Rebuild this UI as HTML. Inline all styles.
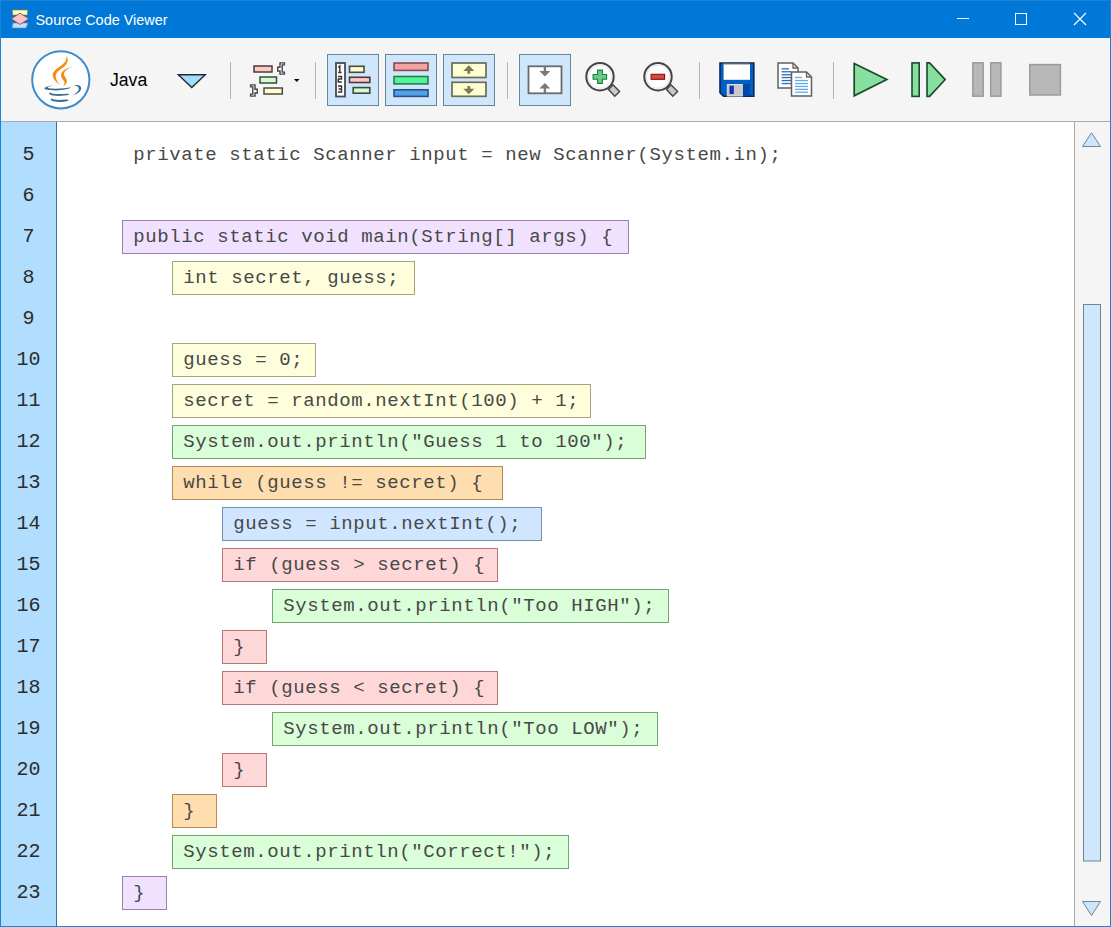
<!DOCTYPE html>
<html><head><meta charset="utf-8">
<style>
html,body{margin:0;padding:0;width:1111px;height:927px;overflow:hidden;background:#f5f5f5;}
*{box-sizing:border-box;}
#gutter{position:absolute;left:1px;top:122px;width:56px;height:804px;background:#b1defe;border-right:1px solid #3f6f98;}
#code{position:absolute;left:57px;top:122px;width:1017px;height:804px;background:#fff;}
#sbar{position:absolute;left:1074px;top:122px;width:36px;height:804px;background:#f5f5f5;border-left:1px solid #a8a8a8;}
.ln{position:absolute;left:1px;width:55px;text-align:center;font:20px "Liberation Mono",monospace;color:#2c2c2c;line-height:24px;}
.cl{position:absolute;font:19px "Liberation Mono",monospace;letter-spacing:0.6px;color:#484848;line-height:24px;white-space:pre;}
.bx{position:absolute;height:34px;border:1px solid;}
.pu{background:#f0e2fe;border-color:#9c7eb0;}
.ye{background:#fefedc;border-color:#a4a47e;}
.gr{background:#dafed8;border-color:#74a474;}
.or{background:#fedeae;border-color:#b48a58;}
.bl{background:#d0e6fe;border-color:#6e92b4;}
.rd{background:#fed8d8;border-color:#b47878;}
svg{position:absolute;left:0;top:0;}
</style></head><body>
<div id="gutter"></div>
<div id="code"></div>
<div id="sbar"></div>
<div class="ln" style="top:143px">5</div>
<div class="cl" style="left:133.3px;top:143px">private static Scanner input = new Scanner(System.in);</div>
<div class="ln" style="top:184px">6</div>
<div class="ln" style="top:225px">7</div>
<div class="bx pu" style="left:122px;top:220px;width:507px"></div>
<div class="cl" style="left:133.3px;top:225px">public static void main(String[] args) {</div>
<div class="ln" style="top:266px">8</div>
<div class="bx ye" style="left:172px;top:261px;width:243px"></div>
<div class="cl" style="left:183.3px;top:266px">int secret, guess;</div>
<div class="ln" style="top:307px">9</div>
<div class="ln" style="top:348px">10</div>
<div class="bx ye" style="left:172px;top:343px;width:144px"></div>
<div class="cl" style="left:183.3px;top:348px">guess = 0;</div>
<div class="ln" style="top:389px">11</div>
<div class="bx ye" style="left:172px;top:384px;width:419px"></div>
<div class="cl" style="left:183.3px;top:389px">secret = random.nextInt(100) + 1;</div>
<div class="ln" style="top:430px">12</div>
<div class="bx gr" style="left:172px;top:425px;width:474px"></div>
<div class="cl" style="left:183.3px;top:430px">System.out.println(&quot;Guess 1 to 100&quot;);</div>
<div class="ln" style="top:471px">13</div>
<div class="bx or" style="left:172px;top:466px;width:331px"></div>
<div class="cl" style="left:183.3px;top:471px">while (guess != secret) {</div>
<div class="ln" style="top:512px">14</div>
<div class="bx bl" style="left:222px;top:507px;width:320px"></div>
<div class="cl" style="left:233.3px;top:512px">guess = input.nextInt();</div>
<div class="ln" style="top:553px">15</div>
<div class="bx rd" style="left:222px;top:548px;width:276px"></div>
<div class="cl" style="left:233.3px;top:553px">if (guess &gt; secret) {</div>
<div class="ln" style="top:594px">16</div>
<div class="bx gr" style="left:272px;top:589px;width:397px"></div>
<div class="cl" style="left:283.3px;top:594px">System.out.println(&quot;Too HIGH&quot;);</div>
<div class="ln" style="top:635px">17</div>
<div class="bx rd" style="left:222px;top:630px;width:45px"></div>
<div class="cl" style="left:233.3px;top:635px">}</div>
<div class="ln" style="top:676px">18</div>
<div class="bx rd" style="left:222px;top:671px;width:276px"></div>
<div class="cl" style="left:233.3px;top:676px">if (guess &lt; secret) {</div>
<div class="ln" style="top:717px">19</div>
<div class="bx gr" style="left:272px;top:712px;width:386px"></div>
<div class="cl" style="left:283.3px;top:717px">System.out.println(&quot;Too LOW&quot;);</div>
<div class="ln" style="top:758px">20</div>
<div class="bx rd" style="left:222px;top:753px;width:45px"></div>
<div class="cl" style="left:233.3px;top:758px">}</div>
<div class="ln" style="top:799px">21</div>
<div class="bx or" style="left:172px;top:794px;width:45px"></div>
<div class="cl" style="left:183.3px;top:799px">}</div>
<div class="ln" style="top:840px">22</div>
<div class="bx gr" style="left:172px;top:835px;width:397px"></div>
<div class="cl" style="left:183.3px;top:840px">System.out.println(&quot;Correct!&quot;);</div>
<div class="ln" style="top:881px">23</div>
<div class="bx pu" style="left:122px;top:876px;width:45px"></div>
<div class="cl" style="left:133.3px;top:881px">}</div>
<svg width="1111" height="927" viewBox="0 0 1111 927">
<rect x="0" y="0" width="1111" height="38" fill="#0078d7"/>
<rect x="0.5" y="0.5" width="1110" height="926" fill="none" stroke="#1a84d8" stroke-width="1"/>
<rect x="1" y="121" width="1109" height="1" fill="#ababab"/>
<rect x="12.5" y="10" width="15" height="5" fill="#fefebc" stroke="#7a7a5a" stroke-width="0.6"/>
<polygon points="13,23 28,23 26,28 12,28" fill="#c4def8" stroke="#6a88a8" stroke-width="0.6"/>
<polygon points="11.3,18.8 20,13.2 28.8,18.8 20,24.4" fill="#ffc2c6" stroke="#7a5050" stroke-width="0.8"/>
<text x="35.5" y="24.5" font-family="Liberation Sans" font-size="15" fill="#fff" textLength="132" lengthAdjust="spacingAndGlyphs">Source Code Viewer</text>
<rect x="957" y="18" width="12" height="1" fill="#fff"/>
<rect x="1015.5" y="13.5" width="11" height="11" fill="none" stroke="#fff" stroke-width="1"/>
<path d="M1074 13 L1086 25 M1086 13 L1074 25" stroke="#fff" stroke-width="1.1" fill="none"/>
<circle cx="60.8" cy="79.8" r="28.6" fill="#fff" stroke="#3d8ccc" stroke-width="2"/>
<path d="M66.3 56 C68.6 59 68.2 63 64.2 66.5 C60.2 69.8 55.9 72 55.7 76 C55.6 79 57.5 82 59.8 85 C56.5 82.5 52.9 79 52.7 75.5 C52.5 71.5 57 68.5 61.5 65.3 C65 62.8 67 60 66.3 56 Z" fill="#f38b14"/>
<path d="M72.5 66.7 C68 67.5 62.5 70 61.2 73.8 C60.3 77 63 79.5 64.2 81.5 C65 83.3 64.2 85 63 86.4 C66.5 84.5 67.6 81.5 66.3 79 C65.3 77 63.6 75.5 64.1 73 C64.9 70.5 68.5 68.3 72.5 66.7 Z" fill="#f38b14"/>
<path d="M53.4 85.3 C49 86 44.5 87.2 44.3 88.3 C44.5 89.9 50 90.6 57 90.4 C63 90.2 69 89 71.6 87.3 C66 88.3 58 88.8 52 88.6 C47.5 88.4 47 87.5 48.5 86.8 C50 86.2 52 85.7 53.4 85.3 Z" fill="#3d6e9a"/>
<path d="M74 85.3 C78.5 84.5 81.6 86 81.1 89 C80.6 92 76.5 94.5 72.4 95.6 C75.5 93.6 78.5 91.5 78.8 89.2 C79 87 77 85.8 74 85.3 Z" fill="#3d6e9a"/>
<path d="M50.5 92 C48.5 93 49 95 53 95.6 C58 96.3 65 96 69.6 94.5 C69 93.8 68 93.5 66.5 93.7 C62 94.2 57 94.2 53.5 93.8 C51.5 93.6 50.8 93 50.5 92 Z" fill="#3d6e9a"/>
<path d="M51.5 98.3 C50 99.3 50.8 101 54.5 101.6 C59 102.2 64.5 101.9 68.8 100.4 C68.2 99.6 67 99.4 65.5 99.6 C61.5 100 57.5 100 54.5 99.6 C52.8 99.4 51.8 98.9 51.5 98.3 Z" fill="#3d6e9a"/>
<text x="110" y="86.2" font-family="Liberation Sans" font-size="18" fill="#000" textLength="37.2" lengthAdjust="spacingAndGlyphs">Java</text>
<polygon points="178.3,74.7 205.3,74.7 191.8,87.6" fill="#a6dcf8" stroke="#1c2c38" stroke-width="1.4" stroke-linejoin="miter"/>
<rect x="230" y="62" width="1" height="37" fill="#b4b4b4"/>
<rect x="315" y="62" width="1" height="37" fill="#b4b4b4"/>
<rect x="507" y="62" width="1" height="37" fill="#b4b4b4"/>
<rect x="699" y="62" width="1" height="37" fill="#b4b4b4"/>
<rect x="833" y="62" width="1" height="37" fill="#b4b4b4"/>
<rect x="254" y="66" width="18" height="6" fill="#ffc8c8" stroke="#4a3a3a" stroke-width="1.5"/>
<rect x="260" y="77" width="16.5" height="6" fill="#d0fcd0" stroke="#3a4a3a" stroke-width="1.5"/>
<rect x="264" y="88" width="18.3" height="6" fill="#fefed0" stroke="#4a4a3a" stroke-width="1.5"/>
<polygon points="280,62.9 284.4,62.9 284.4,64.9 282.2,64.9 282.2,72.1 284.4,72.1 284.4,74.1 280,74.1 280,71 277.7,71 277.7,67.3 280,67.3" fill="#fff" stroke="#454545" stroke-width="1.4" stroke-linejoin="miter"/>
<polygon points="255.0,84.9 250.6,84.9 250.6,86.9 252.8,86.9 252.8,94.1 250.6,94.1 250.6,96.1 255.0,96.1 255.0,93 257.3,93 257.3,89.3 255.0,89.3" fill="#fff" stroke="#454545" stroke-width="1.4" stroke-linejoin="miter"/>
<polygon points="294,79 299.5,79 296.75,82" fill="#000"/>
<rect x="327.5" y="54.5" width="51" height="51" fill="#d0e6fc" stroke="#668896" stroke-width="1"/>
<rect x="385.5" y="54.5" width="51" height="51" fill="#d0e6fc" stroke="#668896" stroke-width="1"/>
<rect x="443.5" y="54.5" width="51" height="51" fill="#d0e6fc" stroke="#668896" stroke-width="1"/>
<rect x="519.5" y="54.5" width="51" height="51" fill="#d0e6fc" stroke="#668896" stroke-width="1"/>
<rect x="336" y="63" width="9" height="33.5" fill="#fff" stroke="#4a4a4a" stroke-width="1.8"/>
<path d="M338.3 67.5 L339.8 66 V72.5 M338.2 72.5 H341.6" stroke="#333" stroke-width="1.4" fill="none"/>
<path d="M338 76.5 H341.5 V79 H338.3 V82 H341.8" stroke="#333" stroke-width="1.4" fill="none"/>
<path d="M338 86 H341.5 V92 H338 M338.5 89 H341.5" stroke="#333" stroke-width="1.4" fill="none"/>
<rect x="349.5" y="66.3" width="14.5" height="6" fill="#fefed0" stroke="#4a4a3a" stroke-width="1.6"/>
<rect x="349.5" y="77.3" width="20.3" height="5.2" fill="#ffc8c8" stroke="#4a3a3a" stroke-width="1.6"/>
<rect x="353.2" y="87.6" width="16.6" height="5.6" fill="#d0fcd0" stroke="#3a4a3a" stroke-width="1.6"/>
<rect x="394" y="63" width="34" height="7.4" fill="#f4a2a2" stroke="#805050" stroke-width="1.6"/>
<rect x="394" y="76.5" width="34" height="7.4" fill="#52f49e" stroke="#2a7a48" stroke-width="1.6"/>
<rect x="394" y="89.8" width="34" height="6.6" fill="#50a0ec" stroke="#2a5080" stroke-width="1.6"/>
<rect x="452" y="63" width="34" height="14.5" fill="#fefed2" stroke="#6c6c5a" stroke-width="1.7"/>
<rect x="452" y="82.3" width="34" height="14" fill="#fefed2" stroke="#6c6c5a" stroke-width="1.7"/>
<path d="M463.3 71 L468.8 65.3 L474.3 71 H470.2 V73.8 H467.4 V71 Z" fill="#7a7a58"/>
<path d="M463.3 88.8 L468.8 94.3 L474.3 88.8 H470.2 V85.9 H467.4 V88.8 Z" fill="#7a7a58"/>
<rect x="528.5" y="66.3" width="33" height="27" fill="#fff" stroke="#6a6a6a" stroke-width="1.8"/>
<path d="M539.4 71 L544.9 76.4 L550.3 71 H546.1 V66 H543.7 V71 Z" fill="#7a7a7a"/>
<path d="M539.4 88.5 L544.9 83.1 L550.3 88.5 H546.1 V93 H543.7 V88.5 Z" fill="#7a7a7a"/>
<polygon points="608.5,89.5 613,84.8 619.6,91.6 614.8,96.3" fill="#c8c8c8" stroke="#444" stroke-width="1.4" stroke-linejoin="miter"/>
<circle cx="600" cy="76.7" r="13.7" fill="#fff" stroke="#444" stroke-width="2"/>
<circle cx="600" cy="76.7" r="11.5" fill="none" stroke="#e8e8e8" stroke-width="1.2"/>
<path d="M597.6 70.1 H602.4 V74.5 H606.6 V79.3 H602.4 V83.4 H597.6 V79.3 H593.1 V74.5 H597.6 Z" fill="#6cc98c" stroke="#17863a" stroke-width="1.1"/>
<polygon points="666.5,89.5 671,84.8 677.6,91.6 672.8,96.3" fill="#c8c8c8" stroke="#444" stroke-width="1.4" stroke-linejoin="miter"/>
<circle cx="658" cy="76.7" r="13.7" fill="#fff" stroke="#444" stroke-width="2"/>
<circle cx="658" cy="76.7" r="11.5" fill="none" stroke="#e8e8e8" stroke-width="1.2"/>
<rect x="651.1" y="74.3" width="13.5" height="5" fill="#d24a4a" stroke="#8a0c0c" stroke-width="1.1"/>
<path d="M720 63 H753.8 V96.3 H723.6 L720 92.7 Z" fill="#0060c8" stroke="#0a2850" stroke-width="1.6"/>
<rect x="723.6" y="63.4" width="26.4" height="16.4" fill="#fff"/>
<rect x="723.6" y="62.8" width="26.4" height="1.6" fill="#606060"/>
<rect x="742.7" y="84" width="7.3" height="12" fill="#0048a8"/>
<rect x="727.3" y="84.5" width="15" height="11.5" fill="#c8c8c8" stroke="#e4dccc" stroke-width="1"/>
<rect x="729.5" y="85.7" width="4.3" height="8.4" fill="#0a34b4"/>
<path d="M778 63 H793 L798 68 V88 H778 Z" fill="#fff" stroke="#606060" stroke-width="1.5" stroke-linejoin="miter"/>
<path d="M793 63 V68 H798" fill="none" stroke="#606060" stroke-width="1.3"/>
<rect x="781.6" y="68.2" width="7.399999999999977" height="1.3" fill="#2a6fbd"/>
<rect x="781.6" y="71.10000000000001" width="9.399999999999977" height="1.3" fill="#2a6fbd"/>
<rect x="781.6" y="74.10000000000001" width="9.399999999999977" height="1.3" fill="#2a6fbd"/>
<rect x="781.6" y="76.9" width="9.399999999999977" height="1.3" fill="#2a6fbd"/>
<rect x="781.6" y="79.9" width="9.399999999999977" height="1.3" fill="#2a6fbd"/>
<rect x="781.6" y="82.9" width="9.399999999999977" height="1.3" fill="#2a6fbd"/>
<path d="M791.5 72 H806.5 L811.5 77 V96 H791.5 Z" fill="#fff" stroke="#606060" stroke-width="1.5" stroke-linejoin="miter"/>
<path d="M806.5 72 V77 H811.5" fill="none" stroke="#606060" stroke-width="1.3"/>
<rect x="795" y="76.80000000000001" width="7" height="1.3" fill="#64acf2"/>
<rect x="795" y="79.9" width="13" height="1.3" fill="#64acf2"/>
<rect x="795" y="82.9" width="13" height="1.3" fill="#64acf2"/>
<rect x="795" y="85.80000000000001" width="13" height="1.3" fill="#64acf2"/>
<rect x="795" y="88.7" width="13" height="1.3" fill="#64acf2"/>
<rect x="795" y="91.60000000000001" width="13" height="1.3" fill="#64acf2"/>
<polygon points="854.2,63.5 886.8,79.6 854.2,95.8" fill="#88e0a0" stroke="#1a4a2a" stroke-width="1.7" stroke-linejoin="miter"/>
<rect x="912" y="62.9" width="7.2" height="33.5" fill="#88e0a0" stroke="#1a4a2a" stroke-width="1.6"/>
<polygon points="927,62.9 929.6,62.9 945.2,79.6 929.6,96.4 927,96.4" fill="#88e0a0" stroke="#1a4a2a" stroke-width="1.6" stroke-linejoin="miter"/>
<rect x="972.8" y="62.8" width="10.4" height="33.4" fill="#b8b8b8" stroke="#9c9c9c" stroke-width="1.5"/>
<rect x="990.7" y="62.8" width="10.2" height="33.4" fill="#b8b8b8" stroke="#9c9c9c" stroke-width="1.5"/>
<rect x="1029.8" y="64.6" width="30.6" height="30.4" fill="#b8b8b8" stroke="#9c9c9c" stroke-width="1.5"/>
<polygon points="1082.5,146.5 1100.5,146.5 1091.5,132.8" fill="#cce4fc" stroke="#6a8896" stroke-width="1"/>
<rect x="1083.5" y="304.5" width="17" height="556.5" fill="#d0e6fc" stroke="#6a8896" stroke-width="1"/>
<polygon points="1082.5,901.5 1100.5,901.5 1091.5,915.5" fill="#cce4fc" stroke="#6a8896" stroke-width="1"/>
</svg>
</body></html>
